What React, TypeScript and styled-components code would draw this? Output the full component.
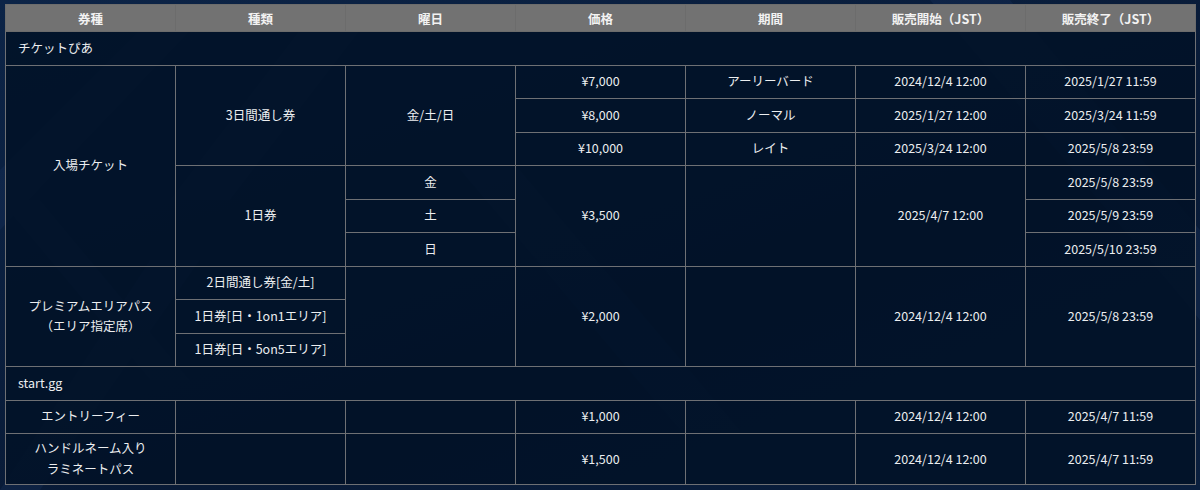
import React from "react";
import styled, { createGlobalStyle } from "styled-components";

const GlobalStyle = createGlobalStyle`
    html, body {
        margin: 0;
        padding: 0;
        background: #0a1f3e;
    }
    body {
        font-family: "Noto Sans CJK JP", "Noto Sans", sans-serif;
    }
`;

const Page = styled.div`
    position: relative;
    width: 1200px;
    height: 490px;
    overflow: hidden;
    padding: 4px 5px;
    box-sizing: border-box;
    background: linear-gradient(160deg, #0c2447 0%, #081a36 60%, #0a1f3e 100%);
`;

// decorative diagonal shapes sitting behind the translucent table
const Backdrop = styled.svg`
    position: absolute;
    left: 0;
    top: 0;
    width: 1200px;
    height: 490px;
    z-index: 0;
`;

const Table = styled.table`
    position: relative;
    z-index: 1;
    width: 1190px;
    border-collapse: collapse;
    table-layout: fixed;
    color: #eceef0;
    font-size: 12.5px;
    font-weight: 400;
`;

const HeadCell = styled.th`
    height: 26px;
    padding: 0;
    background: #727272;
    border: 1px solid #6c6c6c;
    color: #f2f2f2;
    font-weight: 700;
    font-size: 12.5px;
    text-align: center;
    vertical-align: middle;
`;

const Row = styled.tr<{ $tall?: boolean }>`
    height: ${(p) => (p.$tall ? "51px" : "33.5px")};
`;

const Cell = styled.td`
    padding: 0 4px;
    background: rgba(1, 18, 38, 0.86);
    border: 1px solid #6e7074;
    text-align: center;
    vertical-align: middle;
    line-height: 1.65;
    white-space: nowrap;
`;

const GroupCell = styled(Cell)`
    text-align: left;
    padding-left: 12px;
`;

const heads = ["券種", "種類", "曜日", "価格", "期間", "販売開始（JST）", "販売終了（JST）"];

export default function App() {
    return (
        <>
            <GlobalStyle />
            <Page>
                <Backdrop viewBox="0 0 1200 490">
                    <g fill="#1b3560" opacity="0.28">
                        <polygon points="0,230 0,170 150,20 200,20" />
                        <polygon points="0,200 40,200 190,380 150,380" />
                        <polygon points="150,260 200,260 40,490 0,490" />
                        <polygon points="930,0 1010,0 1200,230 1200,320" />
                        <polygon points="460,170 520,170 740,430 680,430" />
                        <polygon points="300,30 360,30 230,200 170,200" />
                    </g>
                </Backdrop>
                <Table>
                    <colgroup>
                        {heads.map((h) => (
                            <col key={h} style={{ width: "170px" }} />
                        ))}
                    </colgroup>
                    <thead>
                        <tr>
                            {heads.map((h) => (
                                <HeadCell key={h}>{h}</HeadCell>
                            ))}
                        </tr>
                    </thead>
                    <tbody>
                        <Row>
                            <GroupCell colSpan={7}>チケットぴあ</GroupCell>
                        </Row>
                        <Row>
                            <Cell rowSpan={6}>入場チケット</Cell>
                            <Cell rowSpan={3}>3日間通し券</Cell>
                            <Cell rowSpan={3}>金/土/日</Cell>
                            <Cell>¥7,000</Cell>
                            <Cell>アーリーバード</Cell>
                            <Cell>2024/12/4 12:00</Cell>
                            <Cell>2025/1/27 11:59</Cell>
                        </Row>
                        <Row>
                            <Cell>¥8,000</Cell>
                            <Cell>ノーマル</Cell>
                            <Cell>2025/1/27 12:00</Cell>
                            <Cell>2025/3/24 11:59</Cell>
                        </Row>
                        <Row>
                            <Cell>¥10,000</Cell>
                            <Cell>レイト</Cell>
                            <Cell>2025/3/24 12:00</Cell>
                            <Cell>2025/5/8 23:59</Cell>
                        </Row>
                        <Row>
                            <Cell rowSpan={3}>1日券</Cell>
                            <Cell>金</Cell>
                            <Cell rowSpan={3}>¥3,500</Cell>
                            <Cell rowSpan={3}></Cell>
                            <Cell rowSpan={3}>2025/4/7 12:00</Cell>
                            <Cell>2025/5/8 23:59</Cell>
                        </Row>
                        <Row>
                            <Cell>土</Cell>
                            <Cell>2025/5/9 23:59</Cell>
                        </Row>
                        <Row>
                            <Cell>日</Cell>
                            <Cell>2025/5/10 23:59</Cell>
                        </Row>
                        <Row>
                            <Cell rowSpan={3}>
                                プレミアムエリアパス
                                <br />
                                （エリア指定席）
                            </Cell>
                            <Cell>2日間通し券[金/土]</Cell>
                            <Cell rowSpan={3}></Cell>
                            <Cell rowSpan={3}>¥2,000</Cell>
                            <Cell rowSpan={3}></Cell>
                            <Cell rowSpan={3}>2024/12/4 12:00</Cell>
                            <Cell rowSpan={3}>2025/5/8 23:59</Cell>
                        </Row>
                        <Row>
                            <Cell>1日券[日・1on1エリア]</Cell>
                        </Row>
                        <Row>
                            <Cell>1日券[日・5on5エリア]</Cell>
                        </Row>
                        <Row>
                            <GroupCell colSpan={7}>start.gg</GroupCell>
                        </Row>
                        <Row>
                            <Cell>エントリーフィー</Cell>
                            <Cell></Cell>
                            <Cell></Cell>
                            <Cell>¥1,000</Cell>
                            <Cell></Cell>
                            <Cell>2024/12/4 12:00</Cell>
                            <Cell>2025/4/7 11:59</Cell>
                        </Row>
                        <Row $tall>
                            <Cell>
                                ハンドルネーム入り
                                <br />
                                ラミネートパス
                            </Cell>
                            <Cell></Cell>
                            <Cell></Cell>
                            <Cell>¥1,500</Cell>
                            <Cell></Cell>
                            <Cell>2024/12/4 12:00</Cell>
                            <Cell>2025/4/7 11:59</Cell>
                        </Row>
                    </tbody>
                </Table>
            </Page>
        </>
    );
}
